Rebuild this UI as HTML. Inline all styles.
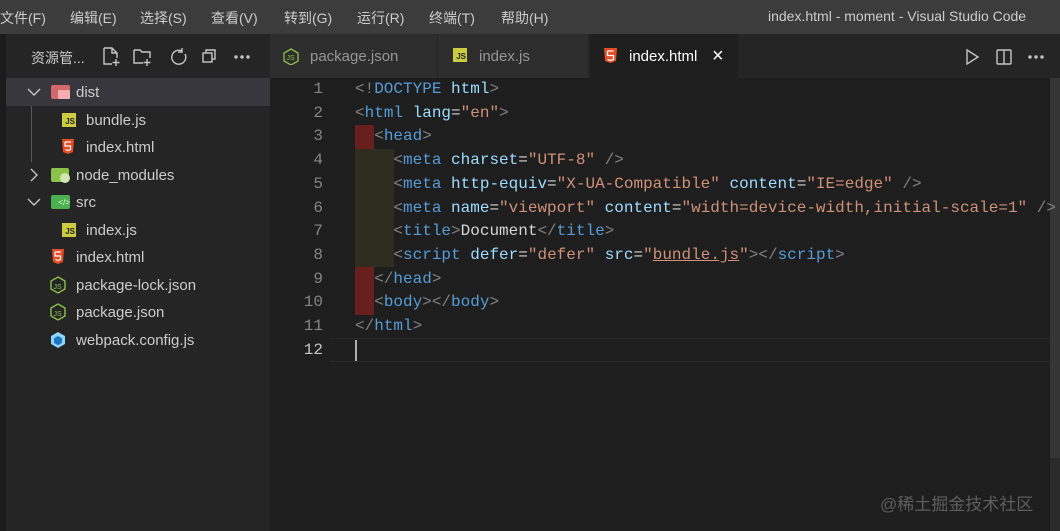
<!DOCTYPE html>
<html><head><meta charset="utf-8"><style>
*{margin:0;padding:0;box-sizing:border-box}
body{width:1060px;height:531px;background:#1e1e1e;overflow:hidden;position:relative;font-family:"Liberation Sans","Noto Sans CJK SC",sans-serif;color:#ccc}
.title{position:absolute;left:0;top:0;width:1060px;height:34px;background:#3c3c3c;font-size:14px;color:#ccc}
.title span{position:absolute;top:8px;white-space:nowrap}
.side{position:absolute;left:0;top:34px;width:270px;height:497px;background:#252526}
.strip{position:absolute;left:0;top:34px;width:6px;height:497px;background:#1b1b1b}
.sh{position:absolute;top:0;left:6px;width:264px;height:44px;font-size:14px}
.row{position:absolute;left:6px;width:264px;height:27.5px;font-size:15px;color:#ccc;line-height:27.5px}
.tabs{position:absolute;left:270px;top:34px;width:790px;height:44px;background:#252526}
.tab{position:absolute;top:0;height:44px;background:#2d2d2d;font-size:15px;color:#969696;line-height:46px;white-space:nowrap}
.gut{position:absolute;left:270px;top:78px;width:60px}
.ln{position:absolute;width:53px;text-align:right;font-family:"Liberation Mono",monospace;font-size:16px;color:#858585;line-height:23.7px}
.code{position:absolute;left:355px;font-family:"Liberation Mono",monospace;font-size:16px;white-space:pre;color:#d4d4d4;letter-spacing:0}
.p{color:#808080}.tg{color:#569cd6}.at{color:#9cdcfe}.s{color:#ce9178}
.js{display:inline-block;width:14px;height:14px;background:#cbcb41;color:#222;font-size:8px;font-weight:bold;text-align:right;line-height:18px;padding-right:1px}
.fl span{position:absolute;white-space:nowrap}
</style></head><body>
<div class="title">
<span style="left:0">文件(F)</span><span style="left:70px">编辑(E)</span><span style="left:140px">选择(S)</span><span style="left:211px">查看(V)</span><span style="left:284px">转到(G)</span><span style="left:357px">运行(R)</span><span style="left:429px">终端(T)</span><span style="left:501px">帮助(H)</span>
<span style="left:768px">index.html - moment - Visual Studio Code</span>
</div>
<div class="side"></div><div class="strip"></div>
<div class="side" style="background:none">
<div class="sh"><span style="position:absolute;left:25px;top:14px;font-size:14px">资源管...</span>
<svg style="position:absolute;left:96px;top:12px" width="150" height="22" fill="none" stroke="#c5c5c5" stroke-width="1.4">
<path d="M2 2h8l5 5v5M2 2v16h8M10 2v5h5M14 13v7M10.5 16.5h7"/>
<path d="M32 4h6l2 2h8v6M32 4v13h9M45 13v7M41.5 16.5h7"/>
<path d="M80 5a7 7 0 1 0 3 3M80 2v4h-4"/>
<rect x="101" y="7" width="9" height="9"/><path d="M104 7V4h9v9h-3"/>
<circle cx="134" cy="11" r="1" fill="#c5c5c5"/><circle cx="140" cy="11" r="1" fill="#c5c5c5"/><circle cx="146" cy="11" r="1" fill="#c5c5c5"/>
</svg></div>
<div class="row" style="top:44px;background:#37373d"></div>
</div>
<div style="position:absolute;left:31px;top:106px;width:1px;height:56px;background:#585858"></div>
<svg style="position:absolute;left:0;top:78px" width="270" height="280" fill="none" stroke="#c5c5c5" stroke-width="1.4">
<path d="M28 11l6 6 6-6"/><path d="M31 91l6 6-6 6"/><path d="M28 121l6 6 6-6"/>
</svg>
<div style="position:absolute;left:51px;top:85px;width:19px;height:14px;background:#d1686b;border-radius:2px"></div>
<div style="position:absolute;left:58px;top:90px;width:12px;height:9px;background:#f3aeb0;border-radius:1px"></div>
<div style="position:absolute;left:51px;top:168px;width:18px;height:14px;background:#8bc34a;border-radius:2px"></div>
<div style="position:absolute;left:60px;top:173px;width:10px;height:10px;background:#cfe8b0;border-radius:50%"></div>
<div style="position:absolute;left:51px;top:195px;width:19px;height:14px;background:#4caf50;border-radius:2px;font-size:8px;color:#dfd;text-align:right;line-height:16px">&lt;/&gt;</div>
<div class="js" style="position:absolute;left:62px;top:113px">JS</div>
<div class="js" style="position:absolute;left:62px;top:223px">JS</div>
<svg style="position:absolute;left:0;top:0" width="270" height="360">
<path d="M62 139h12l-1 13-5 2-5-2z" fill="#e44d26"/>
<path d="M65 142h6M65 142v4h5.5v3.5l-2.5 1-2.5-1" stroke="#fff" stroke-width="1.2" fill="none"/>
<path d="M52 249h12l-1 13-5 2-5-2z" fill="#e44d26"/><path d="M55 252h6M55 252v4h5.5v3.5l-2.5 1-2.5-1" stroke="#fff" stroke-width="1.2" fill="none"/>
<g fill="none" stroke="#8bc34a" stroke-width="1.4"><path d="M58 277l7 4v8l-7 4-7-4v-8z"/><path d="M58 304l7 4v8l-7 4-7-4v-8z"/></g>
<text x="53.5" y="289" font-size="7" fill="#8bc34a" font-family="Liberation Sans">JS</text>
<text x="53.5" y="316" font-size="7" fill="#8bc34a" font-family="Liberation Sans">JS</text>
<path d="M58 332l7 4v8l-7 4-7-4v-8z" fill="#8ed6fb"/><path d="M58 336l4 2.3v4.6l-4 2.3-4-2.3v-4.6z" fill="#1c78c0"/>
</svg>
<div class="fl" style="position:absolute;left:0;top:1px;font-size:15px;color:#ccc">
<span style="left:76px;top:83px">dist</span>
<span style="left:86px;top:111px">bundle.js</span>
<span style="left:86px;top:138px">index.html</span>
<span style="left:76px;top:166px">node_modules</span>
<span style="left:76px;top:193px">src</span>
<span style="left:86px;top:221px">index.js</span>
<span style="left:76px;top:248px">index.html</span>
<span style="left:76px;top:276px">package-lock.json</span>
<span style="left:76px;top:303px">package.json</span>
<span style="left:76px;top:331px">webpack.config.js</span>
</div>
<div class="tabs">
<div class="tab" style="left:0;width:167px"><svg style="position:absolute;left:13px;top:14px" width="16" height="17"><path d="M8 1l7 4v8l-7 4-7-4V5z" fill="none" stroke="#8bc34a" stroke-width="1.3"/><text x="3.5" y="12" font-size="7" fill="#8bc34a" font-family="Liberation Sans">JS</text></svg><span style="position:absolute;left:40px">package.json</span></div>
<div class="tab" style="left:168px;width:150px"><span class="js" style="position:absolute;left:15px;top:14px;line-height:18px">JS</span><span style="position:absolute;left:41px">index.js</span></div>
<div class="tab" style="left:320px;width:148px;background:#1e1e1e;color:#fff"><svg style="position:absolute;left:14px;top:14px" width="14" height="16"><path d="M0 0h13l-1 13-5.5 2L1 13z" fill="#e44d26"/><path d="M3.5 3h6M3.5 3v4.5h6v4l-3 1-3-1" stroke="#fff" stroke-width="1.3" fill="none"/></svg><span style="position:absolute;left:39px">index.html</span><span style="position:absolute;left:122px;font-size:20px;top:-1px">×</span></div>
<svg style="position:absolute;left:694px;top:13px" width="90" height="20" fill="none" stroke="#c5c5c5" stroke-width="1.4"><path d="M3 3l11 7-11 7z"/><rect x="33" y="3" width="14" height="14" rx="1"/><path d="M40 3v14"/><circle cx="66" cy="10" r="1" fill="#c5c5c5"/><circle cx="72" cy="10" r="1" fill="#c5c5c5"/><circle cx="78" cy="10" r="1" fill="#c5c5c5"/></svg>
</div>
<div style="position:absolute;left:355px;top:125px;width:19px;height:23.7px;background:#6a1f1f"></div>
<div style="position:absolute;left:355px;top:267.4px;width:19px;height:47.4px;background:#6a1f1f"></div>
<div style="position:absolute;left:355px;top:148.7px;width:39px;height:118.7px;background:#2d2d20"></div>
<div style="position:absolute;left:330px;top:338px;width:720px;height:24px;border-top:1px solid #282828;border-bottom:1px solid #282828"></div>
<div style="position:absolute;left:355px;top:340px;width:2px;height:21px;background:#aeafad"></div>
<div style="position:absolute;left:1050px;top:78px;width:10px;height:453px;background:#2a2a2a"></div>
<div style="position:absolute;left:1050px;top:78px;width:10px;height:380px;background:#353535"></div>
<div class="gut">
<div class="ln" style="top:0">1</div><div class="ln" style="top:23.7px">2</div><div class="ln" style="top:47.4px">3</div><div class="ln" style="top:71.1px">4</div><div class="ln" style="top:94.8px">5</div><div class="ln" style="top:118.5px">6</div><div class="ln" style="top:142.2px">7</div><div class="ln" style="top:165.9px">8</div><div class="ln" style="top:189.6px">9</div><div class="ln" style="top:213.3px">10</div><div class="ln" style="top:237px">11</div><div class="ln" style="top:260.7px;color:#c6c6c6">12</div>
</div>
<div class="code" style="top:78px;line-height:23.7px"><span class="p">&lt;!</span><span class="tg">DOCTYPE</span> <span class="at">html</span><span class="p">&gt;</span>
<span class="p">&lt;</span><span class="tg">html</span> <span class="at">lang</span>=<span class="s">"en"</span><span class="p">&gt;</span>
  <span class="p">&lt;</span><span class="tg">head</span><span class="p">&gt;</span>
    <span class="p">&lt;</span><span class="tg">meta</span> <span class="at">charset</span>=<span class="s">"UTF-8"</span> <span class="p">/&gt;</span>
    <span class="p">&lt;</span><span class="tg">meta</span> <span class="at">http-equiv</span>=<span class="s">"X-UA-Compatible"</span> <span class="at">content</span>=<span class="s">"IE=edge"</span> <span class="p">/&gt;</span>
    <span class="p">&lt;</span><span class="tg">meta</span> <span class="at">name</span>=<span class="s">"viewport"</span> <span class="at">content</span>=<span class="s">"width=device-width,initial-scale=1"</span> <span class="p">/&gt;</span>
    <span class="p">&lt;</span><span class="tg">title</span><span class="p">&gt;</span>Document<span class="p">&lt;/</span><span class="tg">title</span><span class="p">&gt;</span>
    <span class="p">&lt;</span><span class="tg">script</span> <span class="at">defer</span>=<span class="s">"defer"</span> <span class="at">src</span>=<span class="s">"<u>bundle.js</u>"</span><span class="p">&gt;&lt;/</span><span class="tg">script</span><span class="p">&gt;</span>
  <span class="p">&lt;/</span><span class="tg">head</span><span class="p">&gt;</span>
  <span class="p">&lt;</span><span class="tg">body</span><span class="p">&gt;&lt;/</span><span class="tg">body</span><span class="p">&gt;</span>
<span class="p">&lt;/</span><span class="tg">html</span><span class="p">&gt;</span>
</div>
<div style="position:absolute;left:880px;top:490px;font-size:17px;color:#5e5e5e;white-space:nowrap">@稀土掘金技术社区</div>
</body></html>
